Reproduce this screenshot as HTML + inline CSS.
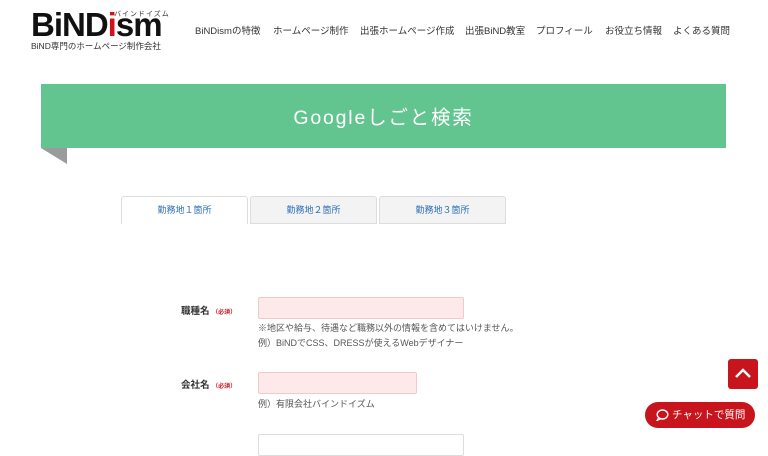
<!DOCTYPE html>
<html><head><meta charset="utf-8"><style>
*{margin:0;padding:0;box-sizing:border-box}
body{width:768px;height:441px;overflow:hidden;background:#fff;font-family:"Liberation Sans","Noto Sans CJK JP",sans-serif;color:#333;position:relative}
.a{position:absolute;white-space:nowrap}
.logo{left:31px;top:8px;font-size:33px;font-weight:bold;letter-spacing:-1px;line-height:33px;color:#111}
.logo i{font-style:normal;color:#d0121b}
.kana{left:114px;top:9px;font-size:7px;color:#333;letter-spacing:1px}
.sub{left:31px;top:40px;font-size:8.5px;color:#333}
.nav{top:23px;font-size:9.5px;color:#333}
.banner{left:41px;top:84px;width:685px;height:64px;background:#62c58f;color:#fff;font-size:19.5px;letter-spacing:1.8px;text-align:center;line-height:68px}
.fold{left:41px;top:148px;width:0;height:0;border-top:16px solid #9b9b9b;border-left:26px solid transparent}
.tab{top:196px;height:28px;border:1px solid #ddd;border-radius:3px 3px 0 0;background:#f3f3f3;font-size:9px;color:#2a6fb5;text-align:center;line-height:27px}
.tab.on{background:#fff;border-bottom:none}
.lbl{font-size:9.5px;font-weight:bold;color:#333}
.req{font-size:6px;color:#d0121b;font-weight:bold}
.in{background:#fde9ea;border:1px solid #f1c9cb;border-radius:2px;height:22px}
.note{font-size:9px;color:#555;line-height:15px}
.top{left:728px;top:359px;width:30px;height:30px;background:#c8141c;border-radius:3px}
.chat{left:645px;top:402px;width:110px;height:26px;background:#c8141c;border-radius:13px;color:#fff;font-size:10.5px;line-height:26px;padding-left:27px}
</style></head><body>
<div class="a logo">BiND<i>i</i>sm</div>
<div class="a kana">バインドイズム</div>
<div class="a sub">BiND専門のホームページ制作会社</div>
<div class="a nav" style="left:195px">BiNDismの特徴</div>
<div class="a nav" style="left:273px">ホームページ制作</div>
<div class="a nav" style="left:360px">出張ホームページ作成</div>
<div class="a nav" style="left:465px">出張BiND教室</div>
<div class="a nav" style="left:536px">プロフィール</div>
<div class="a nav" style="left:605px">お役立ち情報</div>
<div class="a nav" style="left:673px">よくある質問</div>
<div class="a banner">Googleしごと検索</div>
<div class="a fold"></div>
<div class="a tab on" style="left:121px;width:127px">勤務地１箇所</div>
<div class="a tab" style="left:250px;width:127px">勤務地２箇所</div>
<div class="a tab" style="left:379px;width:127px">勤務地３箇所</div>
<div class="a lbl" style="left:181px;top:303px">職種名 <span class="req">（必須）</span></div>
<div class="a in" style="left:258px;top:297px;width:206px"></div>
<div class="a note" style="left:258px;top:321px">※地区や給与、待遇など職務以外の情報を含めてはいけません。<br>例）BiNDでCSS、DRESSが使えるWebデザイナー</div>
<div class="a lbl" style="left:181px;top:377px">会社名 <span class="req">（必須）</span></div>
<div class="a in" style="left:258px;top:372px;width:159px"></div>
<div class="a note" style="left:258px;top:397px">例）有限会社バインドイズム</div>
<div class="a in" style="left:258px;top:434px;width:206px;background:#fff;border-color:#ddd"></div>
<div class="a top"><svg width="30" height="30"><path d="M8 18 L15 11 L22 18" stroke="#fff" stroke-width="2.5" fill="none"/></svg></div>
<div class="a chat"><svg class="a" style="left:11px;top:7px" width="13" height="12"><ellipse cx="6.5" cy="5.5" rx="5.3" ry="4.5" stroke="#fff" stroke-width="1.4" fill="none"/><path d="M2.5 9 L1 11.5 L4.5 10" stroke="#fff" stroke-width="1.2" fill="none"/></svg>チャットで質問</div>
</body></html>
